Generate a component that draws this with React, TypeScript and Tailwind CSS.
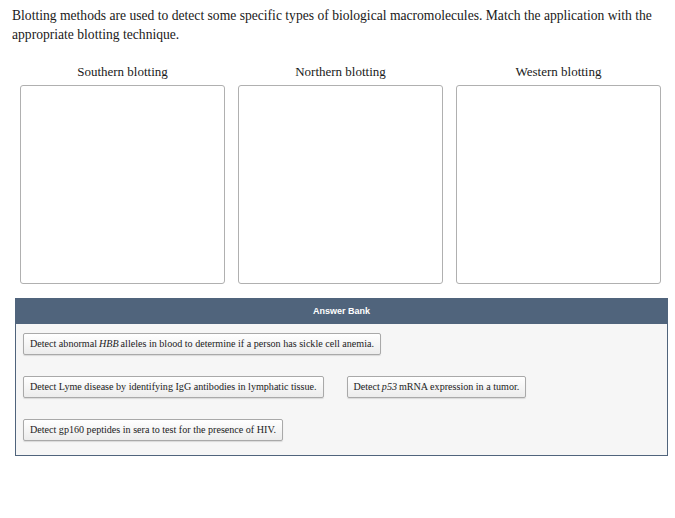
import React from "react";

const serif = { fontFamily: '"Liberation Serif", "Times New Roman", serif' };

const columns = ["Southern blotting", "Northern blotting", "Western blotting"];

function Chip({ children }: { children: React.ReactNode }) {
  return (
    <div className="h-[22px] flex items-center px-[6px] text-[10.1px] text-[#222] bg-gradient-to-b from-white to-[#ececec] border border-[#a9a9a9] rounded-[2px] shadow-[0_1px_1px_rgba(0,0,0,0.12)] whitespace-nowrap">
      {children}
    </div>
  );
}

export default function App() {
  return (
    <div className="w-[675px] h-[518px] bg-white" style={serif}>
      <p className="pl-[12px] pr-[10px] pt-[6px] text-[13.6px] leading-[19px] text-[#1a1a1a]">
        Blotting methods are used to detect some specific types of biological macromolecules. Match the application with the appropriate blotting technique.
      </p>

      <div className="flex gap-[13px] pl-[20px] mt-[19px]">
        {columns.map((c) => (
          <div key={c} className="w-[205px] flex flex-col">
            <div className="text-[13px] leading-[17px] text-[#1a1a1a] text-center">{c}</div>
            <div className="mt-[5px] h-[199px] border border-[#b0b0b0] rounded-[3px] bg-white"></div>
          </div>
        ))}
      </div>

      <div className="ml-[15px] mt-[14px] w-[653px] border border-[#50647c] bg-[#f6f6f6]">
        <div
          className="h-[25px] bg-[#50647c] flex items-center justify-center text-white text-[9px] font-bold"
          style={{ fontFamily: '"Liberation Sans", Arial, sans-serif' }}
        >
          Answer Bank
        </div>
        <div className="flex flex-wrap gap-x-[23px] gap-y-[21px] pl-[7px] pr-[7px] pt-[9px] pb-[14px]">
          <Chip>
            Detect abnormal <i className="mx-[2px]">HBB</i> alleles in blood to determine if a person has sickle cell anemia.
          </Chip>
          <Chip>Detect Lyme disease by identifying IgG antibodies in lymphatic tissue.</Chip>
          <Chip>
            Detect <i className="mx-[2px]">p53</i> mRNA expression in a tumor.
          </Chip>
          <Chip>Detect gp160 peptides in sera to test for the presence of HIV.</Chip>
        </div>
      </div>
    </div>
  );
}
